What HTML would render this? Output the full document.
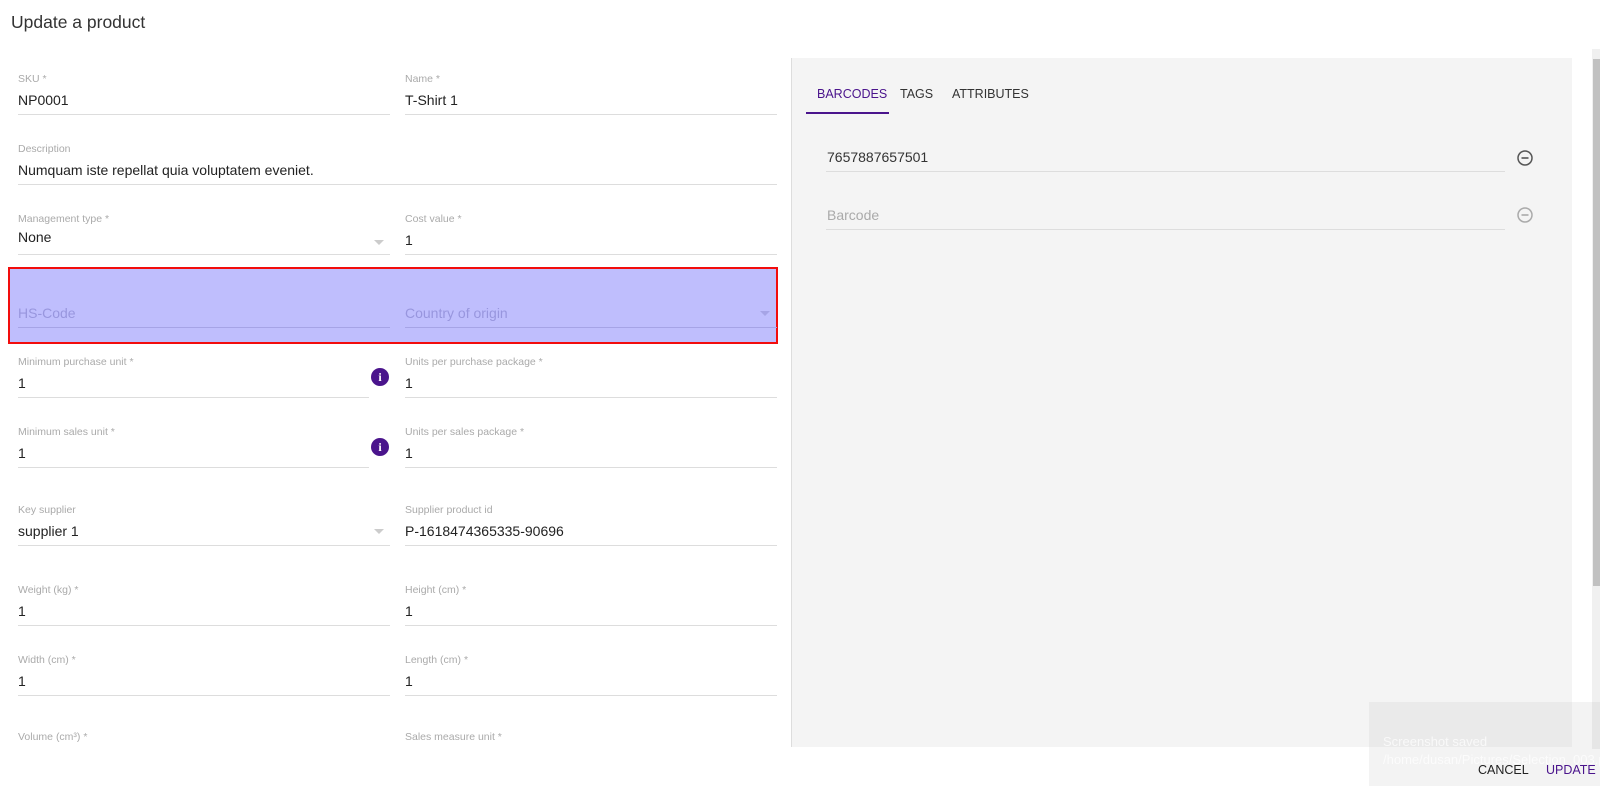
<!DOCTYPE html>
<html><head><meta charset="utf-8"><style>
*{margin:0;padding:0;box-sizing:border-box}
body{width:1600px;height:786px;overflow:hidden;background:#fff;font-family:"Liberation Sans",Roboto,sans-serif;position:relative;color:#222}
.a{position:absolute;white-space:nowrap}
.lb{font-size:10.5px;color:#aaa}
.v{font-size:14px;color:#222}
.ul{position:absolute;height:1px;background:#ddd}
.arr{position:absolute;width:0;height:0;border-left:5px solid transparent;border-right:5px solid transparent;border-top:5px solid #ccc}
.info{position:absolute;width:18px;height:18px;border-radius:50%;background:#4a148c;color:#fff;font:bold 12px "Liberation Serif",serif;text-align:center;line-height:18px}
.tab{position:absolute;font-size:12.5px;color:#333}
</style></head><body>
<div class="a" style="left:11px;top:12px;font-size:17.5px;color:#333">Update a product</div>

<div class="a" style="left:791px;top:58px;width:781px;height:689px;background:#f4f4f4;border-left:1px solid #ddd"></div>
<div class="tab" style="left:817px;top:87px;color:#4a148c">BARCODES</div>
<div class="tab" style="left:900px;top:87px">TAGS</div>
<div class="tab" style="left:952px;top:87px">ATTRIBUTES</div>
<div class="ul" style="left:806px;top:112px;width:83px;height:2px;background:#4a148c"></div>
<div class="a v" style="left:827px;top:149px;color:#333">7657887657501</div>
<div class="ul" style="left:826px;top:171px;width:679px"></div>
<div class="a v" style="left:827px;top:207px;color:#aaa">Barcode</div>
<div class="ul" style="left:826px;top:229px;width:679px"></div>
<svg class="a" style="left:1516px;top:149px" width="18" height="18"><circle cx="9" cy="9" r="7" fill="none" stroke="#555" stroke-width="1.5"/><line x1="5.5" y1="9" x2="12.5" y2="9" stroke="#555" stroke-width="1.6"/></svg>
<svg class="a" style="left:1516px;top:206px" width="18" height="18"><circle cx="9" cy="9" r="7" fill="none" stroke="#aaa" stroke-width="1.5"/><line x1="5.5" y1="9" x2="12.5" y2="9" stroke="#aaa" stroke-width="1.6"/></svg>

<div class="a" style="left:1592px;top:49px;width:8px;height:700px;background:#f0f0f0"></div>
<div class="a" style="left:1593px;top:59px;width:7px;height:527px;background:#c1c1c1"></div>

<div class="a lb" style="left:18px;top:73px">SKU *</div>
<div class="a v" style="left:18px;top:92px">NP0001</div>
<div class="ul" style="left:18px;top:114px;width:372px"></div>
<div class="a lb" style="left:405px;top:73px">Name *</div>
<div class="a v" style="left:405px;top:92px">T-Shirt 1</div>
<div class="ul" style="left:405px;top:114px;width:372px"></div>
<div class="a lb" style="left:18px;top:143px">Description</div>
<div class="a v" style="left:18px;top:162px">Numquam iste repellat quia voluptatem eveniet.</div>
<div class="ul" style="left:18px;top:184px;width:759px"></div>
<div class="a lb" style="left:18px;top:213px">Management type *</div>
<div class="a v" style="left:18px;top:229px">None</div>
<div class="arr" style="left:374px;top:240px"></div>
<div class="ul" style="left:18px;top:254px;width:372px"></div>
<div class="a lb" style="left:405px;top:213px">Cost value *</div>
<div class="a v" style="left:405px;top:232px">1</div>
<div class="ul" style="left:405px;top:254px;width:372px"></div>
<div class="a" style="left:8px;top:267px;width:770px;height:77px;background:#bfbefd;border:2px solid #f20d0d"></div>
<div class="a v" style="left:18px;top:305px;color:#9896de">HS-Code</div>
<div class="ul" style="left:18px;top:327px;width:372px;background:#a6a4e6"></div>
<div class="a v" style="left:405px;top:305px;color:#9896de">Country of origin</div>
<div class="ul" style="left:405px;top:327px;width:372px;background:#a6a4e6"></div>
<div class="arr" style="left:760px;top:311px;border-top-color:#a6a4e6"></div>
<div class="a lb" style="left:18px;top:356px">Minimum purchase unit *</div>
<div class="a v" style="left:18px;top:375px">1</div>
<div class="ul" style="left:18px;top:397px;width:351px"></div>
<div class="info" style="left:371px;top:368px">i</div>
<div class="a lb" style="left:405px;top:356px">Units per purchase package *</div>
<div class="a v" style="left:405px;top:375px">1</div>
<div class="ul" style="left:405px;top:397px;width:372px"></div>
<div class="a lb" style="left:18px;top:426px">Minimum sales unit *</div>
<div class="a v" style="left:18px;top:445px">1</div>
<div class="ul" style="left:18px;top:467px;width:351px"></div>
<div class="info" style="left:371px;top:438px">i</div>
<div class="a lb" style="left:405px;top:426px">Units per sales package *</div>
<div class="a v" style="left:405px;top:445px">1</div>
<div class="ul" style="left:405px;top:467px;width:372px"></div>
<div class="a lb" style="left:18px;top:504px">Key supplier</div>
<div class="a v" style="left:18px;top:523px">supplier 1</div>
<div class="arr" style="left:374px;top:529px"></div>
<div class="ul" style="left:18px;top:545px;width:372px"></div>
<div class="a lb" style="left:405px;top:504px">Supplier product id</div>
<div class="a v" style="left:405px;top:523px">P-1618474365335-90696</div>
<div class="ul" style="left:405px;top:545px;width:372px"></div>
<div class="a lb" style="left:18px;top:584px">Weight (kg) *</div>
<div class="a v" style="left:18px;top:603px">1</div>
<div class="ul" style="left:18px;top:625px;width:372px"></div>
<div class="a lb" style="left:405px;top:584px">Height (cm) *</div>
<div class="a v" style="left:405px;top:603px">1</div>
<div class="ul" style="left:405px;top:625px;width:372px"></div>
<div class="a lb" style="left:18px;top:654px">Width (cm) *</div>
<div class="a v" style="left:18px;top:673px">1</div>
<div class="ul" style="left:18px;top:695px;width:372px"></div>
<div class="a lb" style="left:405px;top:654px">Length (cm) *</div>
<div class="a v" style="left:405px;top:673px">1</div>
<div class="ul" style="left:405px;top:695px;width:372px"></div>
<div class="a lb" style="left:18px;top:731px">Volume (cm³) *</div>
<div class="a lb" style="left:405px;top:731px">Sales measure unit *</div>

<div class="a" style="left:1369px;top:702px;width:231px;height:84px;background:rgba(190,190,190,0.18)"></div>
<div class="a" style="left:1383px;top:734px;font-size:13px;color:rgba(255,255,255,.7)">Screenshot saved</div>
<div class="a" style="left:1383px;top:752px;font-size:13px;color:rgba(255,255,255,.7)">/home/dusan/Pictures/Selection_003.png</div>
<div class="a" style="left:1478px;top:763px;font-size:12.5px;color:#222">CANCEL</div>
<div class="a" style="left:1546px;top:763px;font-size:12.5px;color:#4a148c">UPDATE</div>
</body></html>
